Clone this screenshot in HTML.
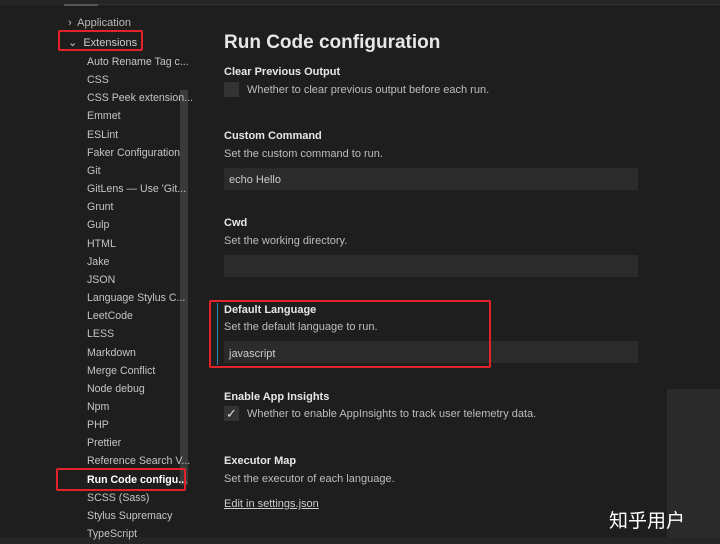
<!DOCTYPE html><html><head><style>
body{margin:0;width:720px;height:544px;background:#1e1e1e;font-family:"Liberation Sans",sans-serif;color:#ccc;position:relative;overflow:hidden;font-size:11px}
.a{position:absolute;white-space:nowrap}
.t{font-weight:bold;color:#e7e7e7;font-size:11px}
.d{color:#bdbdbd;font-size:11px}
.in{position:absolute;left:224px;width:414px;height:22px;background:#2b2b2b}
.red{position:absolute;border:2px solid #e0242a;border-radius:2px}
</style></head><body>
<div class="a" style="left:0;top:0;width:720px;height:5px;background:#252526"></div>
<div class="a" style="left:64px;top:4px;width:34px;height:2px;background:#555"></div>
<div class="a" style="left:98px;top:4px;width:622px;height:1px;background:#333"></div>
<div class="a" style="left:180px;top:90px;width:8px;height:395px;background:#3a3a3a"></div>
<div class="a" style="left:667px;top:389px;width:53px;height:150px;background:#2a2a2a"></div>
<div class="a" style="left:0;top:537px;width:720px;height:7px;background:#252526"></div>
<div class="a" style="left:68px;top:17px;color:#bbb">›&nbsp; Application</div>
<div class="a" style="left:68px;top:36px;color:#ccc">⌄&nbsp; Extensions</div>
<div class="red" style="left:58px;top:30px;width:81px;height:17px"></div>
<div class="a" style="left:87px;top:53px;line-height:18.15px;color:#c5c5c5;font-size:10.6px">Auto Rename Tag c...<br>CSS<br>CSS Peek extension...<br>Emmet<br>ESLint<br>Faker Configuration<br>Git<br>GitLens — Use 'Git...<br>Grunt<br>Gulp<br>HTML<br>Jake<br>JSON<br>Language Stylus C...<br>LeetCode<br>LESS<br>Markdown<br>Merge Conflict<br>Node debug<br>Npm<br>PHP<br>Prettier<br>Reference Search V...<br><b style="color:#fff">Run Code configu...</b><br>SCSS (Sass)<br>Stylus Supremacy<br>TypeScript</div>
<div class="red" style="left:56px;top:468px;width:126px;height:19px"></div>
<div class="a" style="left:224px;top:32px;font-size:19px;font-weight:bold;color:#e7e7e7">Run Code configuration</div>
<div class="a t" style="left:224px;top:66px">Clear Previous Output</div>
<div class="a" style="left:224px;top:82px;width:15px;height:15px;background:#333"></div>
<div class="a d" style="left:247px;top:84px">Whether to clear previous output before each run.</div>
<div class="a t" style="left:224px;top:130px">Custom Command</div>
<div class="a d" style="left:224px;top:148px">Set the custom command to run.</div>
<div class="in" style="top:168px"></div><div class="a" style="left:229px;top:174px;color:#ccc">echo Hello</div>
<div class="a t" style="left:224px;top:217px">Cwd</div>
<div class="a d" style="left:224px;top:235px">Set the working directory.</div>
<div class="in" style="top:255px"></div>
<div class="a" style="left:217px;top:303px;width:1px;height:62px;background:#2a8ab8"></div>
<div class="a t" style="left:224px;top:304px">Default Language</div>
<div class="a d" style="left:224px;top:321px">Set the default language to run.</div>
<div class="in" style="top:341px"></div><div class="a" style="left:229px;top:348px;color:#ccc">javascript</div>
<div class="red" style="left:209px;top:300px;width:278px;height:64px"></div>
<div class="a t" style="left:224px;top:391px">Enable App Insights</div>
<div class="a" style="left:224px;top:406px;width:15px;height:15px;background:#333;color:#ddd;font-size:13px;text-align:center;line-height:15px">✓</div>
<div class="a d" style="left:247px;top:408px">Whether to enable AppInsights to track user telemetry data.</div>
<div class="a t" style="left:224px;top:455px">Executor Map</div>
<div class="a d" style="left:224px;top:473px">Set the executor of each language.</div>
<div class="a" style="left:224px;top:498px;color:#ccc;text-decoration:underline">Edit in settings.json</div>
<div class="a" style="left:609px;top:506px;font-size:19px;color:#fff;font-family:'Noto Sans CJK SC',sans-serif">知乎用户</div>
</body></html>
